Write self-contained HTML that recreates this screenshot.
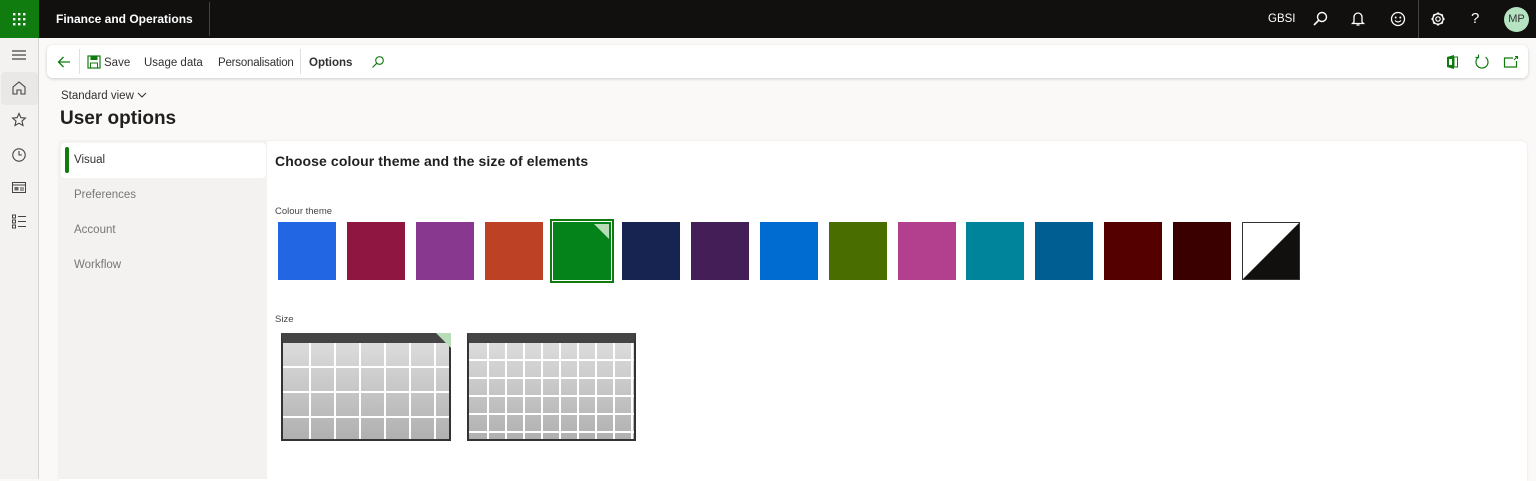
<!DOCTYPE html>
<html><head><meta charset="utf-8"><style>
*{margin:0;padding:0;box-sizing:border-box}
body{width:1536px;height:479px;overflow:hidden;background:#faf9f8;font-family:"Liberation Sans",sans-serif;position:relative;color:#201f1e}
.a{position:absolute}
.top{left:0;top:0;width:1536px;height:38px;background:#11100f}
.waffle{left:0;top:0;width:39px;height:38px;background:#107c10}
.rail{left:0;top:38px;width:39px;height:441px;background:#f3f2f1;border-right:1px solid #d6d4d2}
.tb{left:47px;top:45px;width:1481px;height:33px;background:#fff;border-radius:6px;box-shadow:0 1px 3px rgba(0,0,0,.18)}
.tbt{font-size:11.5px;top:57px;color:#323130}
.panel{left:59px;top:141px;width:1468px;height:340px;background:#fff;border-radius:6px 6px 0 0;box-shadow:0 0 2px rgba(0,0,0,.1)}
.nav{left:59px;top:141px;width:208px;height:338px;background:#f3f2f1}
.navi{left:74px;font-size:11.5px;color:#797775}
.sw{top:222px;width:58px;height:58px}
.grid{background:
 repeating-linear-gradient(90deg,transparent 0 var(--w),#fff var(--w) calc(var(--w) + 2px)),
 repeating-linear-gradient(180deg,transparent 0 var(--h),#fff var(--h) calc(var(--h) + 2px)),
 linear-gradient(#dcdcdc,#b0b0b0);border:2px solid #333;border-top:10px solid #444}
</style></head><body>
<div class="a top"></div>
<div class="a waffle"><svg width="39" height="38"><g fill="#fff">
<rect x="13" y="13" width="2.4" height="2.4"/><rect x="18" y="13" width="2.4" height="2.4"/><rect x="23" y="13" width="2.4" height="2.4"/>
<rect x="13" y="18" width="2.4" height="2.4"/><rect x="18" y="18" width="2.4" height="2.4"/><rect x="23" y="18" width="2.4" height="2.4"/>
<rect x="13" y="23" width="2.4" height="2.4"/><rect x="18" y="23" width="2.4" height="2.4"/><rect x="23" y="23" width="2.4" height="2.4"/></g></svg></div>
<div class="a" style="left:56px;top:12px;color:#fff;font-weight:bold;font-size:12px">Finance and Operations</div>
<div class="a" style="left:209px;top:2px;width:1px;height:34px;background:#444"></div>
<div class="a" style="left:1268px;top:13px;color:#fff;font-size:11.5px">GBSI</div>
<svg class="a" style="left:1310px;top:9px" width="20" height="20"><circle cx="12" cy="8" r="4.5" stroke="#fff" stroke-width="1.4" fill="none"/><path d="M8.7 11.3L4 16" stroke="#fff" stroke-width="1.6"/></svg>
<svg class="a" style="left:1350px;top:10px" width="16" height="18"><path d="M4 12V7a4 4 0 0 1 8 0v5l1.5 1.5h-11z M6.5 15h3" stroke="#fff" stroke-width="1.3" fill="none"/></svg>
<svg class="a" style="left:1388px;top:9px" width="20" height="20"><circle cx="10" cy="10" r="6.5" stroke="#fff" stroke-width="1.3" fill="none"/><circle cx="7.7" cy="8.5" r="1" fill="#fff"/><circle cx="12.3" cy="8.5" r="1" fill="#fff"/><path d="M7 11.5q3 3 6 0" stroke="#fff" stroke-width="1.2" fill="none"/></svg>
<div class="a" style="left:1418px;top:0;width:1px;height:38px;background:#444"></div>
<svg class="a" style="left:1428px;top:9px" width="20" height="20"><circle cx="10" cy="10" r="5.2" stroke="#fff" stroke-width="1.3" fill="none"/><circle cx="10" cy="10" r="2.2" stroke="#fff" stroke-width="1.2" fill="none"/><g stroke="#fff" stroke-width="2"><path d="M10 3.5v1.5M10 15v1.5M3.5 10h1.5M15 10h1.5M5.4 5.4l1 1M13.6 13.6l1 1M5.4 14.6l1-1M13.6 6.4l1-1"/></g></svg>
<div class="a" style="left:1471px;top:10px;color:#fff;font-size:15px">?</div>
<div class="a" style="left:1504px;top:7px;width:25px;height:25px;border-radius:50%;background:#b5e3c2;color:#333;font-size:11px;text-align:center;line-height:25px">MP</div>

<div class="a rail"></div>
<svg class="a" style="left:11px;top:48px" width="16" height="14"><path d="M1 3h14M1 7h14M1 11h14" stroke="#444" stroke-width="1.2"/></svg>
<div class="a" style="left:1px;top:72px;width:37px;height:33px;background:#e9e8e6;border-radius:4px"></div>
<svg class="a" style="left:11px;top:80px" width="16" height="16"><path d="M2 7l6-5 6 5v7H10V10H6v4H2z" stroke="#444" stroke-width="1.1" fill="none"/></svg>
<svg class="a" style="left:11px;top:112px" width="16" height="16"><path d="M8 1.5l1.9 4.2 4.5.4-3.4 3 1 4.4L8 11.2l-4 2.3 1-4.4-3.4-3 4.5-.4z" stroke="#444" stroke-width="1.1" fill="none"/></svg>
<svg class="a" style="left:11px;top:147px" width="16" height="16"><circle cx="8" cy="8" r="6.2" stroke="#444" stroke-width="1.1" fill="none"/><path d="M8 4v4h3" stroke="#444" stroke-width="1.1" fill="none"/></svg>
<svg class="a" style="left:11px;top:180px" width="16" height="16"><rect x="1.5" y="2.5" width="13" height="10" stroke="#444" fill="none"/><path d="M1.5 5h13" stroke="#444"/><rect x="3.5" y="7" width="4" height="3.5" fill="#666"/><path d="M9 8h4M9 10h4" stroke="#444"/></svg>
<svg class="a" style="left:11px;top:213px" width="16" height="16"><g stroke="#444" fill="none"><rect x="1.5" y="2" width="3" height="3"/><rect x="1.5" y="7" width="3" height="3"/><rect x="1.5" y="12" width="3" height="3"/><path d="M7 3.5h8M7 8.5h8M7 13.5h8"/></g></svg>

<div class="a tb"></div>
<svg class="a" style="left:56px;top:54px" width="16" height="16"><path d="M14 8H2.5M7.5 3L2.5 8l5 5" stroke="#107c10" stroke-width="1.3" fill="none"/></svg>
<div class="a" style="left:79px;top:49px;width:1px;height:25px;background:#e1dfdd"></div>
<svg class="a" style="left:87px;top:55px" width="14" height="14"><rect x="1" y="1" width="12" height="12" stroke="#107c10" stroke-width="1.2" fill="none"/><rect x="3.5" y="1" width="7" height="4" fill="#107c10"/><rect x="3.5" y="8" width="7" height="5" stroke="#107c10" fill="none"/></svg>
<div class="a tbt" style="left:104px">Save</div>
<div class="a tbt" style="left:144px">Usage data</div>
<div class="a tbt" style="left:218px;letter-spacing:-0.2px">Personalisation</div>
<div class="a" style="left:300px;top:49px;width:1px;height:25px;background:#e1dfdd"></div>
<div class="a tbt" style="left:309px;font-weight:bold">Options</div>
<svg class="a" style="left:371px;top:55px" width="14" height="14"><circle cx="8.5" cy="5.5" r="3.8" stroke="#107c10" stroke-width="1.1" fill="none"/><path d="M5.8 8.2L1.5 12.5" stroke="#107c10" stroke-width="1.2"/></svg>
<svg class="a" style="left:1445px;top:54px" width="14" height="16"><path d="M2 3l7-2v14l-7-2z" fill="#107c10"/><rect x="9" y="3" width="3.5" height="10" stroke="#107c10" fill="none"/><rect x="4" y="5" width="3" height="6" fill="#fff"/></svg>
<svg class="a" style="left:1474px;top:54px" width="16" height="16"><path d="M11.5 3.2A6 6 0 1 1 4.5 3.2" stroke="#107c10" stroke-width="1.2" fill="none"/><path d="M4.5 0.5v3h-3" stroke="#107c10" stroke-width="1.2" fill="none"/></svg>
<svg class="a" style="left:1503px;top:55px" width="16" height="14"><path d="M10 3H1.5v9h12V6" stroke="#107c10" stroke-width="1.2" fill="none"/><path d="M11 5l3-3M12 1.5h2.5V4" stroke="#107c10" stroke-width="1.1" fill="none"/></svg>

<div class="a" style="left:61px;top:90px;font-size:11.5px;color:#323130">Standard view <svg width="10" height="8"><path d="M1 2l4 4 4-4" stroke="#323130" fill="none"/></svg></div>
<div class="a" style="left:60px;top:108px;font-size:19px;font-weight:600;color:#201f1e">User options</div>

<div class="a panel"></div>
<div class="a nav"></div>
<div class="a" style="left:61px;top:143px;width:205px;height:35px;background:#fff;border-radius:4px"></div>
<div class="a" style="left:65px;top:147px;width:4px;height:26px;background:#107c10;border-radius:2px"></div>
<div class="a navi" style="top:154px;color:#323130">Visual</div>
<div class="a navi" style="top:189px">Preferences</div>
<div class="a navi" style="top:224px">Account</div>
<div class="a navi" style="top:259px">Workflow</div>

<div class="a" style="left:275px;top:153px;font-size:14px;font-weight:600;color:#201f1e;letter-spacing:0.1px">Choose colour theme and the size of elements</div>
<div class="a" style="left:275px;top:206px;font-size:9.5px;color:#484644">Colour theme</div>
<div class="a sw" style="left:278px;background:#2266e3"></div>
<div class="a sw" style="left:347px;background:#8e1640"></div>
<div class="a sw" style="left:416px;background:#89388f"></div>
<div class="a sw" style="left:485px;background:#bd4125"></div>
<div class="a" style="left:550px;top:219px;width:64px;height:64px;border:2px solid #107c10;background:#fff"></div>
<div class="a sw" style="left:553px;background:#05831b;overflow:hidden"><div style="position:absolute;right:2px;top:2px;width:0;height:0;border-left:15px solid transparent;border-top:15px solid #b8dcb8"></div></div>
<div class="a sw" style="left:622px;background:#172350"></div>
<div class="a sw" style="left:691px;background:#441e57"></div>
<div class="a sw" style="left:760px;background:#006cd1"></div>
<div class="a sw" style="left:829px;background:#4a6d00"></div>
<div class="a sw" style="left:898px;background:#b3408e"></div>
<div class="a sw" style="left:966px;background:#00849b"></div>
<div class="a sw" style="left:1035px;background:#005e93"></div>
<div class="a sw" style="left:1104px;background:#540000"></div>
<div class="a sw" style="left:1173px;background:#3a0000"></div>
<div class="a sw" style="left:1242px;border:1px solid #333;background:linear-gradient(to bottom right,#fff 49.5%,#11100f 50.5%)"></div>

<div class="a" style="left:275px;top:314px;font-size:9.5px;color:#484644">Size</div>
<div class="a grid" style="left:281px;top:333px;width:170px;height:108px;--w:23px;--h:23px;background-position:3px 2px,0 0,0 0"></div>
<div class="a" style="left:436px;top:333px;width:0;height:0;border-left:15px solid transparent;border-top:15px solid #b8dcb8"></div>
<div class="a grid" style="left:467px;top:333px;width:169px;height:108px;--w:16px;--h:16px;background-position:2px 1px,0 0,0 0"></div>
</body></html>
